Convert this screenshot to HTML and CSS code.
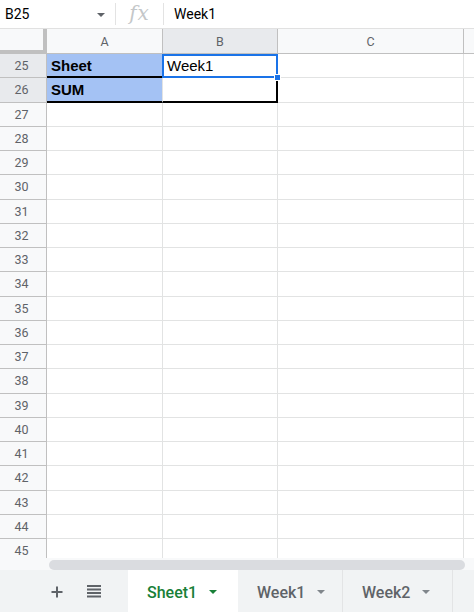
FILE: index.html
```html
<!DOCTYPE html>
<html>
<head>
<meta charset="utf-8">
<link rel="stylesheet" href="styles.css">
</head>
<body>
<div class="app">
  <div class="fbar">
    <div class="namebox"><span class="ref">B25</span><span class="caret dark"></span></div>
    <div class="vsep"></div>
    <div class="fx">fx</div>
    <div class="vsep"></div>
    <div class="fval">Week1</div>
  </div>
  <div class="sheet">
    <div class="grid">
      <div class="corner"></div><div class="ch">A</div><div class="ch sel">B</div><div class="ch">C</div><div class="ch last"></div>

      <div class="rh sel">25</div><div class="c hl bold bb">Sheet</div><div class="c cur">Week1<span class="handle"></span></div><div class="c"></div><div class="c last"></div>
      <div class="rh sel">26</div><div class="c hl bold bb">SUM</div><div class="c bb br"></div><div class="c"></div><div class="c last"></div>
      <div class="rh">27</div><div class="c"></div><div class="c"></div><div class="c"></div><div class="c last"></div>
      <div class="rh">28</div><div class="c"></div><div class="c"></div><div class="c"></div><div class="c last"></div>
      <div class="rh">29</div><div class="c"></div><div class="c"></div><div class="c"></div><div class="c last"></div>
      <div class="rh">30</div><div class="c"></div><div class="c"></div><div class="c"></div><div class="c last"></div>
      <div class="rh">31</div><div class="c"></div><div class="c"></div><div class="c"></div><div class="c last"></div>
      <div class="rh">32</div><div class="c"></div><div class="c"></div><div class="c"></div><div class="c last"></div>
      <div class="rh">33</div><div class="c"></div><div class="c"></div><div class="c"></div><div class="c last"></div>
      <div class="rh">34</div><div class="c"></div><div class="c"></div><div class="c"></div><div class="c last"></div>
      <div class="rh">35</div><div class="c"></div><div class="c"></div><div class="c"></div><div class="c last"></div>
      <div class="rh">36</div><div class="c"></div><div class="c"></div><div class="c"></div><div class="c last"></div>
      <div class="rh">37</div><div class="c"></div><div class="c"></div><div class="c"></div><div class="c last"></div>
      <div class="rh">38</div><div class="c"></div><div class="c"></div><div class="c"></div><div class="c last"></div>
      <div class="rh">39</div><div class="c"></div><div class="c"></div><div class="c"></div><div class="c last"></div>
      <div class="rh">40</div><div class="c"></div><div class="c"></div><div class="c"></div><div class="c last"></div>
      <div class="rh">41</div><div class="c"></div><div class="c"></div><div class="c"></div><div class="c last"></div>
      <div class="rh">42</div><div class="c"></div><div class="c"></div><div class="c"></div><div class="c last"></div>
      <div class="rh">43</div><div class="c"></div><div class="c"></div><div class="c"></div><div class="c last"></div>
      <div class="rh">44</div><div class="c"></div><div class="c"></div><div class="c"></div><div class="c last"></div>
      <div class="rh">45</div><div class="c"></div><div class="c"></div><div class="c"></div><div class="c last"></div>
    </div>
  </div>
  <div class="hscroll">
    <div class="hs-left"></div>
    <div class="hs-track"><div class="thumb"></div></div>
  </div>
  <div class="tabbar">
    <div class="tools">
      <svg class="plus" width="12" height="12" viewBox="0 0 12 12"><path d="M6 0.5v11M0.5 6h11" stroke="#5f6368" stroke-width="2"/></svg>
      <svg class="list" width="16" height="16" viewBox="0 0 16 16"><path d="M1 2h14M1 5.5h14M1 9h14M1 12.5h14" stroke="#5f6368" stroke-width="2"/></svg>
    </div>
    <div class="tab active"><span>Sheet1</span><span class="caret green"></span></div>
    <div class="tab"><span>Week1</span><span class="caret grey"></span></div>
    <div class="tab"><span>Week2</span><span class="caret grey"></span></div>
  </div>
</div>
</body>
</html>
```
FILE: styles.css
```css
* { box-sizing: border-box; }
html, body { margin: 0; padding: 0; background: #fff; }
body { font-family: Roboto, "Liberation Sans", Arial, sans-serif; width: 474px; height: 612px; overflow: hidden; }
.app { display: flex; flex-direction: column; height: 612px; }

.fbar { height: 29px; display: flex; align-items: center; border-bottom: 1px solid #e1e1e1; flex: none; }
.namebox { width: 115px; display: flex; align-items: center; justify-content: space-between; padding: 0 10px 0 5px; }
.ref { font-size: 14px; color: #000; }
.caret { display: inline-block; width: 0; height: 0; border-left: 4px solid transparent; border-right: 4px solid transparent; border-top: 4px solid #5f6368; }
.caret.dark { border-top-color: #5f6368; margin-top: 1px; }
.vsep { width: 1px; height: 22px; background: #e3e3e3; }
.fx { width: 47px; text-align: center; font-family: "DejaVu Serif", "Liberation Serif", serif; font-style: italic; font-size: 20px; color: #c4c7c9; letter-spacing: 1px; line-height: 1; padding-bottom: 3px; }
.fval { padding-left: 10px; font-size: 14px; color: #000; }

.sheet { height: 529px; overflow: hidden; flex: none; }
.grid { display: grid; grid-template-columns: 47px 116px 115px 186px 1fr; grid-template-rows: 25px; grid-auto-rows: 24.25px; }
.corner { background: #f8f9fa; border-right: 4px solid #c0c0c0; border-bottom: 4px solid #c0c0c0; }
.ch { background: #f8f9fa; border-right: 1px solid #c0c0c0; border-bottom: 1px solid #c0c0c0; font-size: 12.5px; color: #5f6368; display: flex; align-items: center; justify-content: center; padding-top: 1px; }
.ch.sel { background: #e8eaed; }
.ch.last { border-right: none; }
.rh { background: #f8f9fa; border-right: 1px solid #c0c0c0; border-bottom: 1px solid #c0c0c0; font-size: 12.5px; color: #5f6368; display: flex; align-items: center; justify-content: center; padding-right: 3px; }
.rh.sel { background: #e8eaed; }
.c { border-right: 1px solid #e2e3e3; border-bottom: 1px solid #e2e3e3; font-family: "Liberation Sans", Arial, sans-serif; font-size: 15px; color: #000; display: flex; align-items: center; padding: 0 4px; white-space: nowrap; }
.c.last { border-right: none; }
.hl { background: #a4c2f4; }
.bold { font-weight: bold; }
.bb { border-bottom: 2px solid #000; }
.br { border-right: 2px solid #000; }
.c.cur { position: relative; border-bottom-color: #000; border-right-color: #000; }
.c.cur::after { content: ""; position: absolute; left: -1px; top: 0; right: -1px; bottom: -1px; border: 2px solid #1a73e8; }
.handle { position: absolute; right: -4px; bottom: -4px; width: 7px; height: 7px; background: #1a73e8; border: 1px solid #fff; z-index: 2; }

.hscroll { height: 12px; display: flex; flex: none; }
.hs-left { width: 47px; background: #f8f9fa; }
.hs-track { flex: 1; background: #f8f9fa; padding: 2px 9px 0 2px; }
.thumb { height: 10px; border-radius: 5px; background: #dadce0; }

.tabbar { flex: 1; background: #f1f3f4; display: flex; align-items: stretch; }
.tools { width: 128px; display: flex; align-items: center; padding-left: 51px; gap: 23px; padding-top: 2px; }
.tab { display: flex; align-items: center; padding: 2px 0 0 19px; font-size: 16px; font-weight: 500; color: #5f6368; border-right: 1px solid #e3e4e5; width: 105px; }
.tab .caret { margin-left: 12px; border-left-width: 4.5px; border-right-width: 4.5px; border-top-width: 4.5px; }
.tab.active { background: #fff; color: #188038; width: 110px; border-right: none; }
.caret.green { border-top-color: #188038; }
.caret.grey { border-top-color: #80868b; }
.tab + .tab + .tab { width: 110px; }
```
